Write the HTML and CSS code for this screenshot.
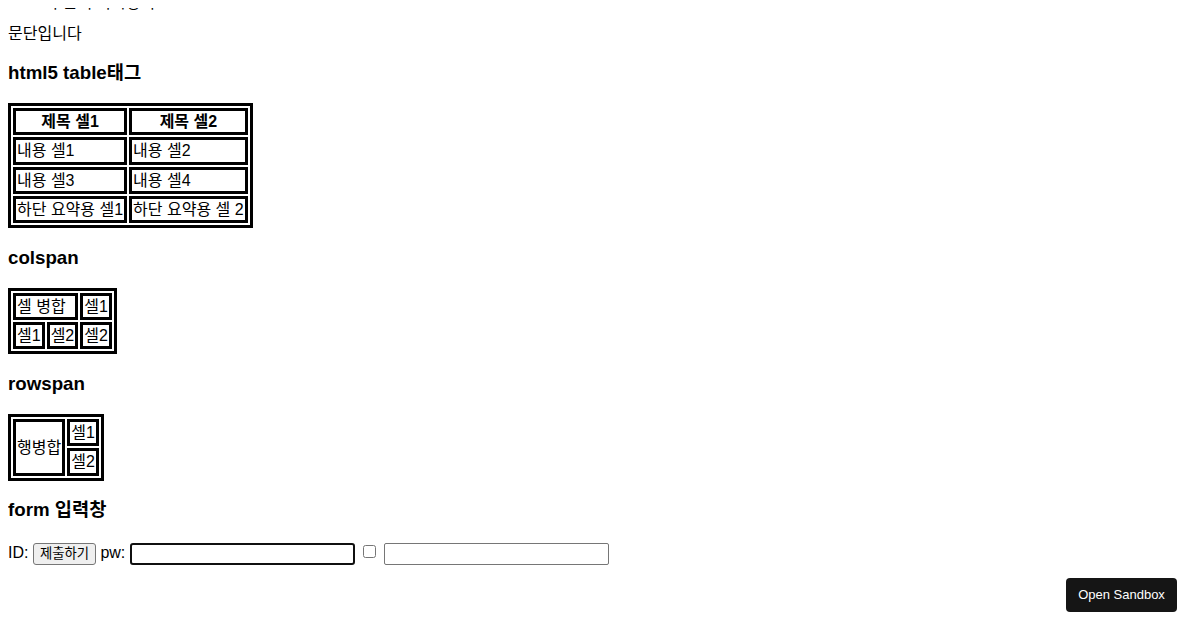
FILE: index.html
```html
<!DOCTYPE html>
<html lang="ko">
<head>
<meta charset="utf-8">
<title>html5 table</title>
<link rel="stylesheet" href="styles.css">
</head>
<body>
<ul class="list-cut"><li>무순서 목록항목</li></ul>
<p class="lead">문단입니다</p>

<h3>html5 table태그</h3>
<table class="grid">
  <thead>
    <tr><th>제목 셀1</th><th>제목 셀2</th></tr>
  </thead>
  <tbody>
    <tr><td>내용 셀1</td><td>내용 셀2</td></tr>
    <tr><td>내용 셀3</td><td>내용 셀4</td></tr>
  </tbody>
  <tfoot>
    <tr><td>하단 요약용 셀1</td><td>하단 요약용 셀 2</td></tr>
  </tfoot>
</table>

<h3>colspan</h3>
<table class="grid">
  <tr><td colspan="2">셀 병합</td><td>셀1</td></tr>
  <tr><td>셀1</td><td>셀2</td><td>셀2</td></tr>
</table>

<h3>rowspan</h3>
<table class="grid">
  <tr><td rowspan="2">행병합</td><td>셀1</td></tr>
  <tr><td>셀2</td></tr>
</table>

<h3>form 입력창</h3>
<form class="login">
  ID: <button type="button" class="btn">제출하기</button> pw: <input type="password" class="field field-focus" autofocus> <input type="checkbox" class="check"> <input type="text" class="field">
</form>

<a class="sandbox-btn" href="#">Open Sandbox</a>
</body>
</html>
```

FILE: styles.css
```css
html, body {
  background: #ffffff;
}

body {
  margin: 8px;
  font-family: "Liberation Sans", Arial, "Noto Sans CJK KR", sans-serif;
  font-size: 16px;
  line-height: 1.2;
  color: #000000;
}

.list-cut {
  margin: -15px 0 0;
  padding-left: 40px;
}

p {
  margin: 16px 0;
}

.lead {
  margin-top: 12px;
}

h3 {
  font-size: 1.17em;
  margin: 1em 0;
  font-weight: bold;
}

.grid {
  border: 3px solid #000000;
  border-spacing: 2px;
}

.grid th,
.grid td {
  border: 3px solid #000000;
  padding: 1px;
}

.grid th {
  font-weight: bold;
  text-align: center;
}

.grid td {
  text-align: left;
  vertical-align: middle;
}

.login {
  margin: 0;
  padding-top: 2px;
}

.btn {
  font-family: "Liberation Sans", Arial, "Noto Sans CJK KR", sans-serif;
  font-size: 13.33px;
  line-height: 16px;
  height: 22px;
  padding: 1px 6px;
  border: 1px solid #767676;
  border-radius: 3px;
  background: #efefef;
  color: #000000;
  vertical-align: baseline;
}

.field {
  box-sizing: border-box;
  width: 225px;
  height: 22px;
  border: 1px solid #767676;
  border-radius: 2px;
  padding: 1px 2px;
  font-family: "Liberation Sans", Arial, sans-serif;
  font-size: 13.33px;
  background: #ffffff;
}

.field-focus,
.field-focus:focus {
  border: 2px solid #101010;
  border-radius: 3px;
  outline: none;
  caret-color: #000000;
}

.check {
  width: 13px;
  height: 13px;
  margin: 3px 3px 3px 4px;
}

.sandbox-btn {
  position: fixed;
  right: 23px;
  bottom: 18px;
  box-sizing: border-box;
  width: 111px;
  height: 34px;
  display: flex;
  align-items: center;
  justify-content: center;
  background: #151515;
  color: #ffffff;
  border-radius: 4px;
  font-family: "Liberation Sans", Arial, sans-serif;
  font-size: 13px;
  text-decoration: none;
}
```
